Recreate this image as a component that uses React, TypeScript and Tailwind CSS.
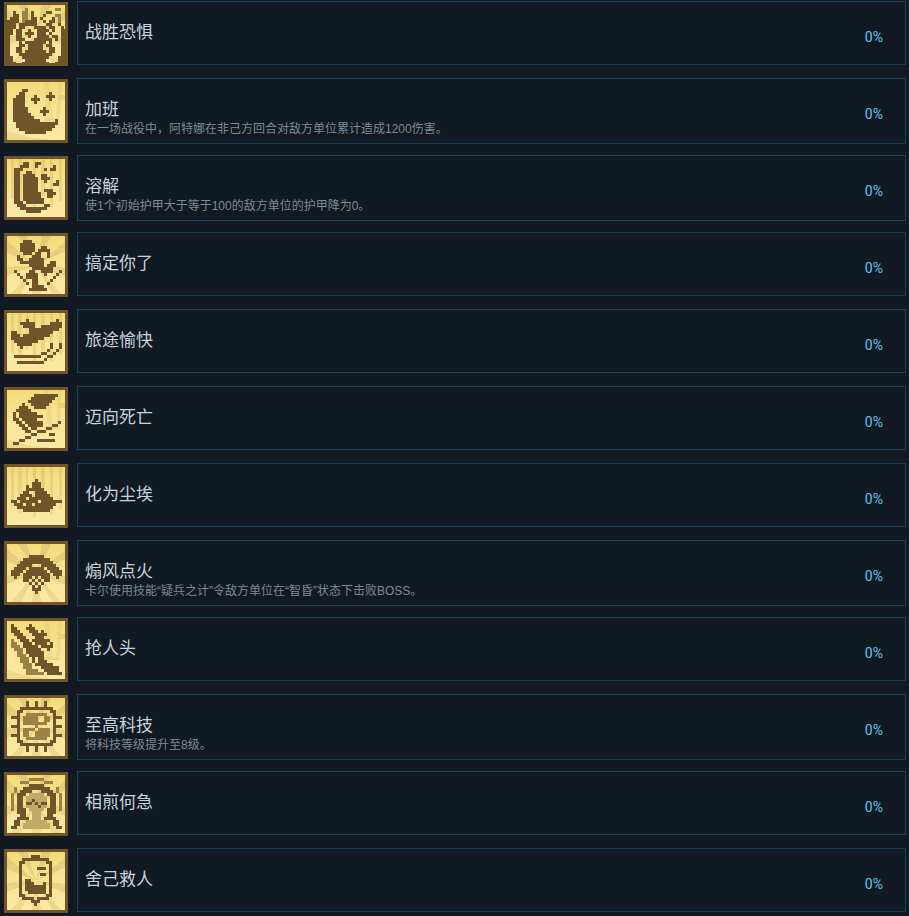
import { useId } from 'react';

type Backdrop = 'rays' | 'stripes' | 'slant';

type Sprite = {
  x: number;
  y: number;
  backdrop: Backdrop;
  rows: string[];
};

type Achievement = {
  title: string;
  description?: string;
  percent: number;
  sprite: Sprite;
};

// Sprites are drawn on a 3px grid: # is dark, m is the mid tone, l is pale, . is empty.
const CELL = 3;
const COLORS: Record<string, string> = { '#': '#70542a', m: '#9c8045', l: '#c2a866' };

const achievements: Achievement[] = [
  {
    title: '战胜恐惧',
    percent: 0,
    sprite: {
      x: 3,
      y: 3,
      backdrop: 'rays',
      rows: [
        '...................',
        '......m.........mm.',
        '..#..mm.#....##....',
        '..##.mm.#...#...mm.',
        '.###.mm.##.#...#.m.',
        '####.m####..#.##.m.',
        '###.######...##..#.',
        '###.##...####.##..#',
        '##.##..#..####.#..##',
        '##.##.###.###.#...##',
        '#..##..#..####.##.##',
        '#..###...######.#.##',
        '#...#.#######.#...##',
        '#...##.#####.##...##',
        '#..##..#####..##..##',
        '#..##.#######.##..##',
        '#...###########...##',
        '##...#########...###',
        '##....#######....###',
        '###..#########..####',
      ],
    },
  },
  {
    title: '加班',
    description: '在一场战役中，阿特娜在非己方回合对敌方单位累计造成1200伤害。',
    percent: 0,
    sprite: {
      x: 9,
      y: 10,
      backdrop: 'slant',
      rows: [
        '...##..........',
        '..##........#..',
        '.###...#...###.',
        '####..###...#..',
        '####...#.......',
        '####...........',
        '#####.....#....',
        '#####....###...',
        '######....#....',
        '#######........',
        '#########.....#',
        '.##############',
        '.#############.',
        '..###########..',
        '....#######....',
      ],
    },
  },
  {
    title: '溶解',
    description: '使1个初始护甲大于等于100的敌方单位的护甲降为0。',
    percent: 0,
    sprite: {
      x: 10,
      y: 6,
      backdrop: 'stripes',
      rows: [
        '...##..##......',
        '..###..#.....#.',
        '###.......#.##.',
        '##..##.........',
        '##.####..##....',
        '##.#####.###...',
        '##.#####..#...#',
        '##.#####.....##',
        '##.#####.......',
        '##.#####..###..',
        '##.######..###.',
        '##.######..##..',
        '##.#######.....',
        '###.######.....',
        '.###......##...',
        '..#########....',
        '....#####......',
      ],
    },
  },
  {
    title: '搞定你了',
    percent: 0,
    sprite: {
      x: 10,
      y: 7,
      backdrop: 'rays',
      rows: [
        '...###..........',
        '..#####.........',
        '..#####..##.....',
        '..#####.####....',
        '...###.##..#....',
        '.#....###..#....',
        '.##..#####......',
        '..########..##..',
        '.....#####.###..',
        '......#######...',
        '#....##..####..#',
        '.#..####..#...#.',
        '..#.####.....#..',
        '...#..##....#...',
        '....#.##...#....',
        '......####......',
        '.....######.....',
      ],
    },
  },
  {
    title: '旅途愉快',
    percent: 0,
    sprite: {
      x: 7,
      y: 9,
      backdrop: 'stripes',
      rows: [
        '.....#.........#.',
        '...#####.....####',
        '....####..#######',
        '......##########.',
        '##....########...',
        '###.#########....',
        '###########......',
        '.########........',
        '..#####......#..#',
        '...#.........#..#',
        '............#..#.',
        '..........##..#..',
        '.#########..##...',
        '...........#.....',
        '..#########......',
      ],
    },
  },
  {
    title: '迈向死亡',
    percent: 0,
    sprite: {
      x: 9,
      y: 7,
      backdrop: 'slant',
      rows: [
        '.......########.',
        '......########..',
        '.....########...',
        '...#..######....',
        '..###..####.....',
        '.#####..........',
        '#.######........',
        '#.########......',
        '##.#####........',
        '.##.######.....#',
        '..##.#####...##.',
        '...##.##...##...',
        '....##..###.....',
        '......##....##..',
        '....##..........',
        '..##....######..',
        '##..............',
      ],
    },
  },
  {
    title: '化为尘埃',
    percent: 0,
    sprite: {
      x: 7,
      y: 15,
      backdrop: 'stripes',
      rows: [
        '........#........',
        '.......###.......',
        '.....#.###.......',
        '.....######......',
        '....##..####.....',
        '...####.#####....',
        '..###.########...',
        '##.######.#######',
        '.###.##.#######..',
        '..############...',
        '....#########....',
      ],
    },
  },
  {
    title: '煽风点火',
    description: '卡尔使用技能“疑兵之计”令敌方单位在“智昏”状态下击败BOSS。',
    percent: 0,
    sprite: {
      x: 7,
      y: 14,
      backdrop: 'rays',
      rows: [
        '......#####......',
        '....#########....',
        '...###########...',
        '..#####...#####..',
        '.####.#####.####.',
        '####.#######.####',
        '###.#########.###',
        '.#..###.#.###..#.',
        '....##.#.#.##....',
        '......#.#.#......',
        '.......#.#.......',
        '.......###.......',
        '........#........',
      ],
    },
  },
  {
    title: '抢人头',
    percent: 0,
    sprite: {
      x: 7,
      y: 6,
      backdrop: 'slant',
      rows: [
        '#.....#..........',
        '##...###.........',
        '###...###.#......',
        '.###...#####.....',
        '..###...###......',
        'm..###.######....',
        'mm..###.####.#...',
        'mmm.#####.####...',
        '.mmm.#####..#....',
        '..mm.######......',
        '..mmm.#####......',
        '...mmm.#.##......',
        '...mmm.#.###.....',
        '....mmm.######...',
        '....mmm...######.',
        '.....mmmm..#####.',
        '.....mmmmmm.#####',
      ],
    },
  },
  {
    title: '至高科技',
    description: '将科技等级提升至8级。',
    percent: 0,
    sprite: {
      x: 7,
      y: 6,
      backdrop: 'rays',
      rows: [
        '.....#..#..#.....',
        '.....#..#..#.....',
        '...###########...',
        '..##.........##..',
        '..#..mmmmmmm..#..',
        '###.mmmmm..mm.###',
        '..#.mmmmm..mm.#..',
        '..#.mmmmmmmm..#..',
        '###.....m.....###',
        '..#.mmmm.mmmm.#..',
        '..#.mm..mmmmm.#..',
        '###.mm..mmmmm.###',
        '..#..mmmmmmm..#..',
        '..##.........##..',
        '...###########...',
        '.....#..#..#.....',
        '.....#..#..#.....',
      ],
    },
  },
  {
    title: '相煎何急',
    percent: 0,
    sprite: {
      x: 7,
      y: 6,
      backdrop: 'rays',
      rows: [
        '......mmmmm......',
        '...mmm.....mmm...',
        '......#####......',
        '.m..#########..m.',
        '.m.####...####.m.',
        'm.###.lllll.###.m',
        'm.##.lllllll.##.m',
        'm.##.ll#llll.##.m',
        'm.##.##l#l##.##.m',
        'm.##.llll#ll.##.m',
        'm.###.lllll.###.m',
        '..###..lll..###..',
        '...##..lll..##...',
        '..####.lll.####..',
        '.##..lllllll..##.',
        '.##.lllllllll.##.',
        '##..lllllllll..##',
      ],
    },
  },
  {
    title: '舍己救人',
    percent: 0,
    sprite: {
      x: 15,
      y: 6,
      backdrop: 'rays',
      rows: [
        '....###....',
        '.#########.',
        '##.......##',
        '#.........#',
        '#.....###.#',
        '#.........#',
        '#......##.#',
        '#.........#',
        '#.##......#',
        '#.###...#.#',
        '#.#######.#',
        '#.#######.#',
        '#..######.#',
        '##.......##',
        '.####.####.',
        '....###....',
        '.....#.....',
      ],
    },
  },
];

function BackdropShapes({ kind }: { kind: Backdrop }) {
  if (kind === 'stripes') {
    return (
      <g fill="#e5cd76">
        <rect x="7" y="3" width="3" height="40" />
        <rect x="14" y="3" width="4" height="46" />
        <rect x="22" y="3" width="2" height="36" />
        <rect x="29" y="3" width="3" height="50" />
        <rect x="37" y="3" width="4" height="38" />
        <rect x="46" y="3" width="3" height="48" />
        <rect x="55" y="3" width="3" height="42" />
      </g>
    );
  }
  if (kind === 'slant') {
    return (
      <g fill="#e3cb78">
        <path d="M40 3h5l4 40h-6zM54 3h4l-2 40h-4z" opacity="0.5" />
        <path d="M54 16h7v5h-7zM40 39h14v3H40zM3 52l20 6 25 3H3z" />
      </g>
    );
  }
  return (
    <g fill="#e2ca77">
      <path d="M32 32L3 8V20zM32 32L14 3h9zM32 32L38 3h9zM32 32L61 9v9z" />
      <path d="M32 32L3 34v9zM32 32L7 61h10zM32 32l-4 29h9zM32 32l16 29h9zM32 32l29 3v9z" />
    </g>
  );
}

function AchievementIcon({ sprite, label }: { sprite: Sprite; label: string }) {
  const id = useId();
  return (
    <svg
      viewBox="0 0 64 64"
      role="img"
      aria-label={label}
      shapeRendering="crispEdges"
      className="mt-px size-16 shrink-0"
    >
      <defs>
        <linearGradient id={id} x1="0" y1="0" x2="0" y2="1">
          <stop offset="0" stopColor="#f3db78" />
          <stop offset="1" stopColor="#fbe9a4" />
        </linearGradient>
        <linearGradient id={`${id}-fade`} x1="0" y1="0" x2="0" y2="1">
          <stop offset="0" stopColor="#fbe9a4" stopOpacity="0" />
          <stop offset="1" stopColor="#fbe9a4" stopOpacity="0.5" />
        </linearGradient>
      </defs>
      <rect width="64" height="64" fill="#70542a" />
      <rect x="3" y="3" width="58" height="58" fill={`url(#${id})`} />
      <BackdropShapes kind={sprite.backdrop} />
      <rect x="3" y="3" width="58" height="58" fill={`url(#${id}-fade)`} />
      {sprite.rows.map((row, r) =>
        row.split('').map((c, i) =>
          c === '.' ? null : (
            <rect
              key={`${r}-${i}`}
              x={sprite.x + i * CELL}
              y={sprite.y + r * CELL}
              width={CELL}
              height={CELL}
              fill={COLORS[c]}
            />
          )
        )
      )}
    </svg>
  );
}

function AchievementRow({ item }: { item: Achievement }) {
  return (
    <li className="flex min-h-[77px] items-start gap-[9px] last:min-h-16">
      <AchievementIcon sprite={item.sprite} label={item.title} />
      <div className="flex min-h-16 min-w-0 flex-1 items-start justify-between border border-[#1b4158] pr-[22px] pl-[7px]">
        <div className="min-w-0 pt-[21px] pb-[5px]">
          <h3 className="text-[17px] leading-5 text-[#c6d4df]">{item.title}</h3>
          {item.description && (
            <p className="text-xs leading-[18px] text-[#7f8a96]">{item.description}</p>
          )}
        </div>
        <div className="pt-[25px] font-[Roboto,sans-serif] text-sm leading-5 text-[#66c0f4]">
          {item.percent}%
        </div>
      </div>
    </li>
  );
}

export default function App() {
  return (
    <main
      lang="zh-CN"
      className="min-h-screen bg-[#111922] pt-px pr-[3px] pl-1 font-['Liberation_Sans','Noto_Sans_CJK_SC',sans-serif]"
    >
      <ul>
        {achievements.map((item) => (
          <AchievementRow key={item.title} item={item} />
        ))}
      </ul>
    </main>
  );
}
